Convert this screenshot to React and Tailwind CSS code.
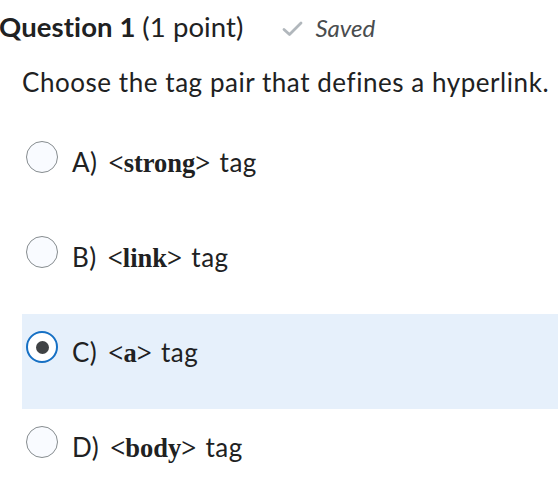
import React from "react";

const options = [
  { letter: "A)", tag: "<strong>", selected: false },
  { letter: "B)", tag: "<link>", selected: false },
  { letter: "C)", tag: "<a>", selected: true },
  { letter: "D)", tag: "<body>", selected: false },
];

function Radio({ selected }) {
  if (selected) {
    return (
      <div className="w-[32px] h-[32px] rounded-full border-[2.5px] border-[#1670c4] bg-white flex items-center justify-center shrink-0">
        <div className="w-[13px] h-[13px] rounded-full bg-[#3f4244]" />
      </div>
    );
  }
  return (
    <div className="w-[32px] h-[32px] rounded-full border border-[#868c8f] bg-[#f9fbff] shrink-0" />
  );
}

export default function App() {
  return (
    <div
      className="w-[558px] h-[487px] bg-white overflow-hidden text-[#202122]"
      style={{ fontFamily: "Lato, 'Noto Sans', sans-serif" }}
    >
      <div className="flex items-baseline pt-[10px] h-[48px]">
        <h1 className="text-[27.5px] leading-[34px] font-bold ml-[-1px] tracking-[0.1px] whitespace-nowrap">
          Question 1 <span className="font-normal">(1 point)</span>
        </h1>
        <div className="flex items-baseline ml-[39px]">
          <svg width="21" height="16" viewBox="0 0 21 16" className="self-center mt-[2px]">
            <path d="M2 8.5 L7.5 13.5 L19 2" fill="none" stroke="#b1b7bc" strokeWidth="2.8" strokeLinecap="round" strokeLinejoin="round" />
          </svg>
          <span className="italic text-[24px] text-[#494c4e] ml-[12px]">Saved</span>
        </div>
      </div>
      <p className="ml-[22px] mt-[18px] text-[26px] leading-[32px] tracking-[0.55px] whitespace-nowrap">
        Choose the tag pair that defines a hyperlink.
      </p>
      <div className="ml-[22px] mt-[26px]">
        {options.map((o, i) => (
          <div
            key={i}
            className={`flex items-start h-[95px] pl-[4px] ${o.selected ? "bg-[#e6f0fb]" : ""}`}
          >
            <div className="mt-[17px]">
              <Radio selected={o.selected} />
            </div>
            <div className="mt-[22px] ml-[14px] text-[26px] leading-[32px] tracking-[0.5px] whitespace-nowrap">
              <span>{o.letter}</span>
              <span
                className="font-bold ml-[11px] text-[26.5px] tracking-normal"
                style={{ fontFamily: "'Liberation Serif', serif" }}
              >
                {o.tag}
              </span>
              <span className="ml-[2px]"> tag</span>
            </div>
          </div>
        ))}
      </div>
    </div>
  );
}
